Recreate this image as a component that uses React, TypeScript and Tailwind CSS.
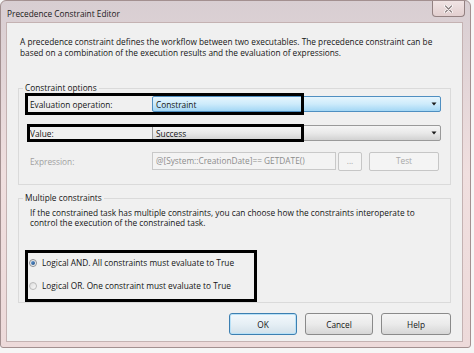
import React from 'react';

function Combo({
  value,
  blue = false,
}: {
  value: string;
  blue?: boolean;
}) {
  return (
    <div
      className={
        blue
          ? 'flex h-[16px] w-[289px] items-center justify-between rounded-[2px] border border-[#4f8fc1] bg-gradient-to-b from-[#e6f5fd] via-[#cdebfb] to-[#a3d7f5] pr-[3px] pl-[3px]'
          : 'flex h-[16px] w-[289px] items-center justify-between rounded-[2px] border border-[#9a9a9a] bg-gradient-to-b from-[#f5f5f5] via-[#e9e9e9] to-[#d2d2d2] pr-[3px] pl-[3px]'
      }
    >
      <span className="leading-[11px]">{value}</span>
      <svg width="6" height="4" viewBox="0 0 6 4">
        <path d="M0.5 0.5 L5.5 0.5 L3 3.5 Z" fill="#1a1a1a" />
      </svg>
    </div>
  );
}

function Radio({ checked, label }: { checked?: boolean; label: string }) {
  return (
    <div className="flex h-[11px] items-center gap-[5px]">
      <span
        className={
          checked
            ? 'flex h-[8px] w-[8px] items-center justify-center rounded-full border border-[#8c8f92] bg-gradient-to-br from-[#e4e4e4] to-[#fbfbfb]'
            : 'flex h-[8px] w-[8px] items-center justify-center rounded-full border border-[#b9b9b9] bg-gradient-to-br from-[#dcdcdc] to-[#fbfbfb]'
        }
      >
        {checked && (
          <span className="h-[4px] w-[4px] rounded-full bg-gradient-to-br from-[#6aa0d8] to-[#1c4d86]" />
        )}
      </span>
      <span className="leading-[11px] whitespace-nowrap">{label}</span>
    </div>
  );
}

export default function App() {
  return (
    <div className="h-[353px] w-[474px] overflow-hidden bg-[#f6f6f6] font-['Open_Sans',sans-serif] text-[8.3px] text-[#141414]">
      <div className="flex h-[348px] w-[471px] flex-col rounded-t-[6px] rounded-b-[3px] border border-[#a39090] bg-gradient-to-b from-[#d8ced2] via-[#f0dfdf] to-[#eddada] pr-[7px] pb-[5px] pl-[5px]">
        {/* title bar */}
        <div className="flex h-[21px] items-start justify-between">
          <span className="mt-[7px] pl-[1px] leading-[11px] text-[#1a1a1a]">
            Precedence Constraint Editor
          </span>
          <div className="-mr-[2px] flex h-[16px] w-[33px] items-center justify-center rounded-b-[4px] border border-t-0 border-[#938181] bg-gradient-to-b from-[#f1e4e4] to-[#e2cfcf]">
            <svg width="9" height="8" viewBox="0 0 9 8">
              <path
                d="M1.5 1 L7.5 7 M7.5 1 L1.5 7"
                stroke="#ffffff"
                strokeWidth="2.6"
                strokeLinecap="round"
              />
              <path
                d="M1.5 1 L7.5 7 M7.5 1 L1.5 7"
                stroke="#8a7c7c"
                strokeWidth="1.2"
                strokeLinecap="round"
              />
            </svg>
          </div>
        </div>

        {/* client area */}
        <div className="flex flex-1 flex-col border border-[#c4b2b2] bg-[#f0f0f0]">
          <p className="mt-[13px] pl-[13px] leading-[11px] whitespace-nowrap">
            A precedence constraint defines the workflow between two executables. The precedence constraint can be
            <br />
            based on a combination of the execution results and the evaluation of expressions.
          </p>

          {/* constraint options */}
          <fieldset className="mx-[11px] mt-[25px] border border-[#dadada] pb-[14px]">
            <legend className="ml-[4px] px-[2px] leading-[10px]">Constraint options</legend>

            <div className="relative flex h-[22px] items-center">
              <span className="w-[133px] pl-[11px] leading-[11px]">Evaluation operation:</span>
              <Combo value="Constraint" blue />
              <div className="pointer-events-none absolute top-0 left-[6px] h-[22px] w-[279px] border-[3px] border-black" />
            </div>

            <div className="relative mt-[9px] flex h-[18px] items-center">
              <span className="w-[133px] pl-[11px] leading-[11px]">Value:</span>
              <Combo value="Success" />
              <div className="pointer-events-none absolute top-0 left-[8px] h-[18px] w-[277px] border-[3px] border-black" />
            </div>

            <div className="mt-[10px] flex h-[18px] items-center">
              <span className="w-[133px] pl-[11px] leading-[11px] text-[#a0a0a0]">Expression:</span>
              <div className="flex h-[18px] w-[184px] items-center border border-[#c9c9c9] bg-[#f3f3f3] px-[3px] text-[#8c8c8c]">
                @[System::CreationDate]== GETDATE()
              </div>
              <div className="ml-[2px] flex h-[19px] w-[24px] items-center justify-center rounded-[2px] border border-[#c6c6c6] bg-[#f4f4f4] text-[#a8a8a8]">
                ...
              </div>
              <div className="ml-[7px] flex h-[19px] w-[70px] items-center justify-center rounded-[2px] border border-[#c6c6c6] bg-[#f4f4f4] text-[#a8a8a8]">
                Test
              </div>
            </div>
          </fieldset>

          {/* multiple constraints */}
          <fieldset className="mx-[11px] mt-[8px] border border-[#dadada]">
            <legend className="ml-[4px] px-[2px] leading-[10px]">Multiple constraints</legend>
            <p className="mt-[5px] pl-[11px] leading-[10px] whitespace-nowrap">
              If the constrained task has multiple constraints, you can choose how the constraints interoperate to
              <br />
              control the execution of the constrained task.
            </p>
            <div className="mt-[22px] ml-[6px] flex h-[52px] w-[232px] flex-col gap-[12px] border-[3px] border-black pt-[4px] pl-[1px]">
              <Radio checked label="Logical AND. All constraints must evaluate to True" />
              <Radio label="Logical OR. One constraint must evaluate to True" />
            </div>
          </fieldset>

          {/* buttons */}
          <div className="mt-[10px] flex justify-end gap-[8px] pr-[11px]">
            <button className="h-[22px] w-[68px] rounded-[3px] border border-[#3c7fb1] bg-gradient-to-b from-[#f2f8fc] via-[#e6eff5] to-[#d2e1ea] leading-[11px] shadow-[inset_0_0_0_1px_#b9e1f7]">
              OK
            </button>
            <button className="h-[22px] w-[68px] rounded-[3px] border border-[#8a8a8a] bg-gradient-to-b from-[#f4f4f4] via-[#ebebeb] to-[#d6d6d6] leading-[11px]">
              Cancel
            </button>
            <button className="h-[22px] w-[70px] rounded-[3px] border border-[#8a8a8a] bg-gradient-to-b from-[#f4f4f4] via-[#ebebeb] to-[#d6d6d6] leading-[11px]">
              Help
            </button>
          </div>
        </div>
      </div>
    </div>
  );
}
